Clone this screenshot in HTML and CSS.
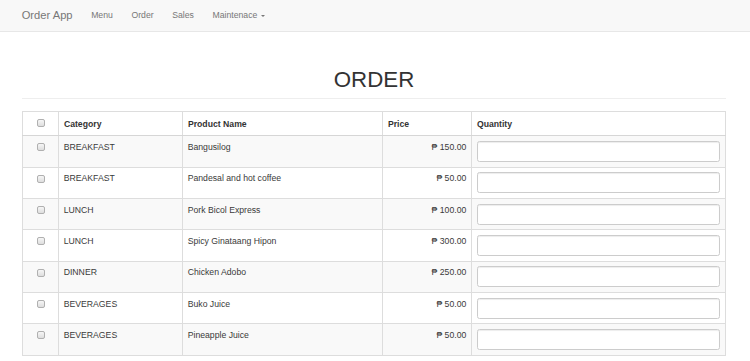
FILE: index.html
```html
<!DOCTYPE html>
<html lang="en">
<head>
<meta charset="utf-8">
<title>Order App</title>
<link rel="stylesheet" href="styles.css">
</head>
<body>
<nav class="navbar">
  <div class="nav-inner">
    <a class="brand" href="#">Order App</a>
    <ul class="nav">
      <li><a href="#">Menu</a></li>
      <li><a href="#">Order</a></li>
      <li><a href="#">Sales</a></li>
      <li><a href="#">Maintenace <span class="caret"></span></a></li>
    </ul>
  </div>
</nav>
<main class="page">
  <h1 class="page-title">ORDER</h1>
  <table class="order-table">
    <colgroup>
      <col class="c-check"><col class="c-cat"><col class="c-name"><col class="c-price"><col>
    </colgroup>
    <thead>
      <tr>
        <th class="check"><input type="checkbox" class="cb"></th>
        <th>Category</th>
        <th>Product Name</th>
        <th>Price</th>
        <th>Quantity</th>
      </tr>
    </thead>
    <tbody>
      <tr><td class="check"><input type="checkbox" class="cb"></td><td>BREAKFAST</td><td>Bangusilog</td><td class="price">₱ 150.00</td><td><input type="text" class="qty"></td></tr>
      <tr><td class="check"><input type="checkbox" class="cb"></td><td>BREAKFAST</td><td>Pandesal and hot coffee</td><td class="price">₱ 50.00</td><td><input type="text" class="qty"></td></tr>
      <tr><td class="check"><input type="checkbox" class="cb"></td><td>LUNCH</td><td>Pork Bicol Express</td><td class="price">₱ 100.00</td><td><input type="text" class="qty"></td></tr>
      <tr><td class="check"><input type="checkbox" class="cb"></td><td>LUNCH</td><td>Spicy Ginataang Hipon</td><td class="price">₱ 300.00</td><td><input type="text" class="qty"></td></tr>
      <tr><td class="check"><input type="checkbox" class="cb"></td><td>DINNER</td><td>Chicken Adobo</td><td class="price">₱ 250.00</td><td><input type="text" class="qty"></td></tr>
      <tr><td class="check"><input type="checkbox" class="cb"></td><td>BEVERAGES</td><td>Buko Juice</td><td class="price">₱ 50.00</td><td><input type="text" class="qty"></td></tr>
      <tr><td class="check"><input type="checkbox" class="cb"></td><td>BEVERAGES</td><td>Pineapple Juice</td><td class="price">₱ 50.00</td><td><input type="text" class="qty"></td></tr>
    </tbody>
  </table>
</main>
</body>
</html>
```

FILE: styles.css
```css
html, body {
  margin: 0;
  padding: 0;
  background: #fff;
}
body {
  font-family: "Liberation Sans", Arial, "DejaVu Sans", sans-serif;
  font-size: 8.68px;
  line-height: 12.4px;
  color: #3a3a3a;
}
a { text-decoration: none; }

.navbar {
  background: #f8f8f8;
  border-bottom: 1px solid #e7e7e7;
  height: 31px;
}
.nav-inner {
  display: flex;
  align-items: center;
  height: 31px;
  padding-left: 12.4px;
}
.brand {
  font-size: 11.16px;
  line-height: 12.4px;
  color: #777;
  padding: 9.3px;
}
.nav {
  list-style: none;
  margin: 0;
  padding: 0;
  display: flex;
}
.nav a {
  display: block;
  color: #777;
  padding: 9.3px;
  line-height: 12.4px;
  font-size: 8.68px;
}
.caret {
  display: inline-block;
  width: 0;
  height: 0;
  margin-left: 1.5px;
  vertical-align: middle;
  border-top: 2.5px solid #777;
  border-left: 2.5px solid transparent;
  border-right: 2.5px solid transparent;
}

.page {
  padding: 0 24px 0 22px;
}
.page-title {
  margin: 35.7px 0 12.4px;
  padding-bottom: 5.6px;
  border-bottom: 1px solid #eee;
  font-size: 22.3px;
  line-height: 24.5px;
  font-weight: normal;
  text-align: center;
  color: #333;
}

.order-table {
  width: 100%;
  border-collapse: collapse;
  table-layout: fixed;
  border: 1px solid #ddd;
}
.c-check { width: 36px; }
.c-cat { width: 124px; }
.c-name { width: 200px; }
.c-price { width: 89px; }

.order-table th,
.order-table td {
  border: 1px solid #ddd;
  padding: 4.7px;
  text-align: left;
  vertical-align: top;
  line-height: 12.4px;
}
.order-table th {
  font-weight: bold;
  color: #333;
  padding: 5.4px 4.9px 5.2px;
  border-bottom: 1px solid #d6d6d6;
}
.order-table tbody tr:nth-child(odd) {
  background: #f9f9f9;
}
.order-table .check {
  text-align: center;
}
.order-table .price {
  text-align: right;
}

.cb {
  -webkit-appearance: none;
  appearance: none;
  display: block;
  box-sizing: border-box;
  width: 8px;
  height: 8px;
  margin: 2.4px auto 0;
  border: 1px solid #b0b0b0;
  border-radius: 2px;
  background: linear-gradient(#f6f6f6, #dedede);
}
th .cb { margin-top: 1.8px; }

.qty {
  display: block;
  box-sizing: border-box;
  width: 100%;
  height: 21px;
  margin: 0;
  padding: 0 7px;
  border: 1px solid #ccc;
  border-radius: 2.5px;
  background: #fff;
  box-shadow: inset 0 1px 1px rgba(0, 0, 0, .075);
  font: inherit;
}
```
